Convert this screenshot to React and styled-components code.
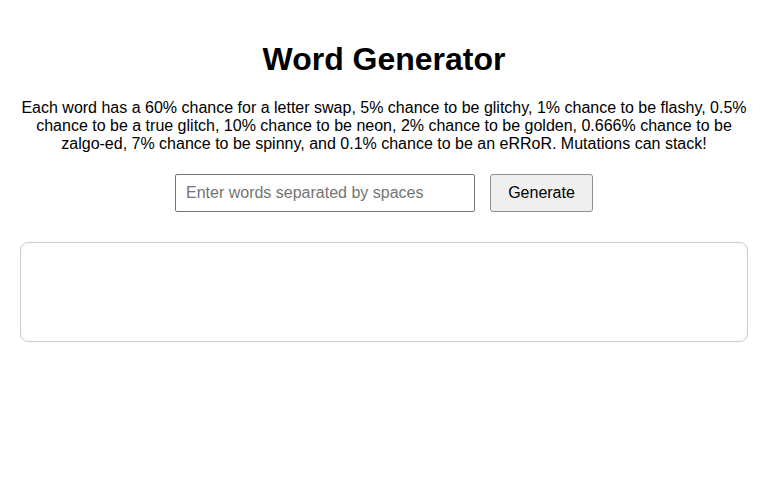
import React, { useState } from "react";
import styled, { createGlobalStyle } from "styled-components";

const GlobalStyle = createGlobalStyle`
  body {
    margin: 0;
    padding: 20px;
    font-family: "Liberation Sans", Arial, sans-serif;
    background: #fff;
    color: #000;
    text-align: center;
  }
`;

const Title = styled.h1`
  font-size: 32px;
  font-weight: bold;
  margin: 21px 0;
`;

const Intro = styled.p`
  font-size: 16px;
  line-height: 18px;
  margin: 0;
`;

const Controls = styled.div`
  display: flex;
  justify-content: center;
  align-items: center;
  gap: 15px;
  margin: 21px 0 30px;
`;

const WordInput = styled.input`
  width: 300px;
  height: 38px;
  box-sizing: border-box;
  padding: 0 10px;
  font-family: "Liberation Sans", Arial, sans-serif;
  font-size: 16px;
  border: 1px solid #767676;
  border-radius: 2px;
  color: #000;

  &::placeholder {
    color: #757575;
  }
`;

const GenerateButton = styled.button`
  width: 103px;
  height: 38px;
  box-sizing: border-box;
  padding: 0;
  font-family: "Liberation Sans", Arial, sans-serif;
  font-size: 16px;
  background: #efefef;
  border: 1px solid #8f8f8f;
  border-radius: 3px;
  color: #000;
  cursor: pointer;
`;

const Output = styled.div`
  min-height: 100px;
  box-sizing: border-box;
  border: 1px solid #ccc;
  border-radius: 8px;
  padding: 10px;
  text-align: left;
`;

export default function App() {
  const [text, setText] = useState("");
  const [words, setWords] = useState([]);

  return (
    <>
      <GlobalStyle />
      <Title>Word Generator</Title>
      <Intro>
        Each word has a 60% chance for a letter swap, 5% chance to be glitchy,
        1% chance to be flashy, 0.5% chance to be a true glitch, 10% chance to
        be neon, 2% chance to be golden, 0.666% chance to be zalgo-ed, 7%
        chance to be spinny, and 0.1% chance to be an eRRoR. Mutations can
        stack!
      </Intro>
      <Controls>
        <WordInput
          value={text}
          onChange={(e) => setText(e.target.value)}
          placeholder="Enter words separated by spaces"
        />
        <GenerateButton onClick={() => setWords(text.split(" ").filter(Boolean))}>
          Generate
        </GenerateButton>
      </Controls>
      <Output>{words.join(" ")}</Output>
    </>
  );
}
